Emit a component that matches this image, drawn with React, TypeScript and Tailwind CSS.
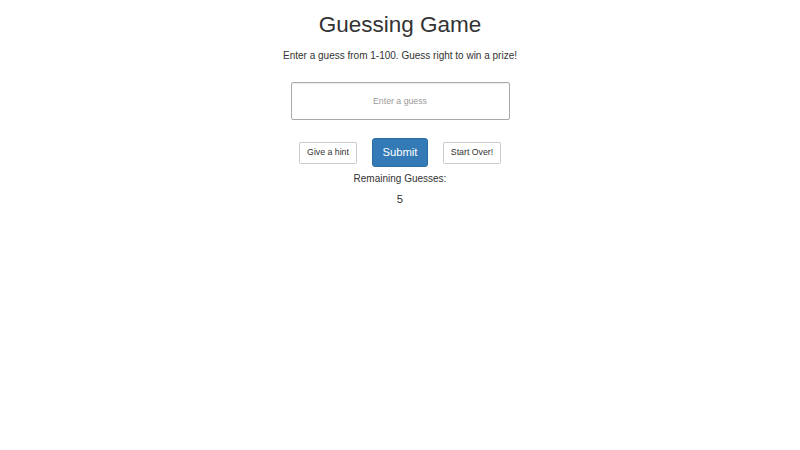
import { useState } from "react";

export default function App() {
  const [guess, setGuess] = useState("");
  const [remaining] = useState(5);

  return (
    <div className="min-h-[450px] w-full bg-white text-[#333] font-['Liberation_Sans',Arial,sans-serif]">
      <div className="flex flex-col items-center pt-[9px]">
        {/* heading */}
        <h1 className="text-[22.5px] leading-[32px] font-normal">Guessing Game</h1>
        <p className="mt-[7px] text-[10px] leading-[16px]">
          Enter a guess from 1-100. Guess right to win a prize!
        </p>

        {/* guess input */}
        <input
          value={guess}
          onChange={(e) => setGuess(e.target.value)}
          placeholder="Enter a guess"
          className="mt-[18px] h-[38px] w-[219px] rounded-[2px] border border-[#aaa] text-center text-[8.75px] text-[#555] placeholder:text-[#999] shadow-[inset_0_1px_1px_rgba(0,0,0,0.075)] outline-none"
        />

        {/* actions */}
        <div className="mt-[18px] flex items-center gap-[15px]">
          <button className="h-[22px] w-[58px] rounded-[2px] border border-[#ccc] bg-white text-[8.75px] text-[#333]">
            Give a hint
          </button>
          <button className="h-[29px] w-[56px] rounded-[3px] border border-[#2e6da4] bg-[#337ab7] text-[11.25px] text-white">
            Submit
          </button>
          <button className="h-[22px] w-[58px] rounded-[2px] border border-[#ccc] bg-white text-[8.75px] text-[#333]">
            Start Over!
          </button>
        </div>

        {/* counter */}
        <p className="mt-[4px] text-[10px] leading-[16px]">Remaining Guesses:</p>
        <p className="mt-[3px] text-[11.25px] leading-[18px]">{remaining}</p>
      </div>
    </div>
  );
}
